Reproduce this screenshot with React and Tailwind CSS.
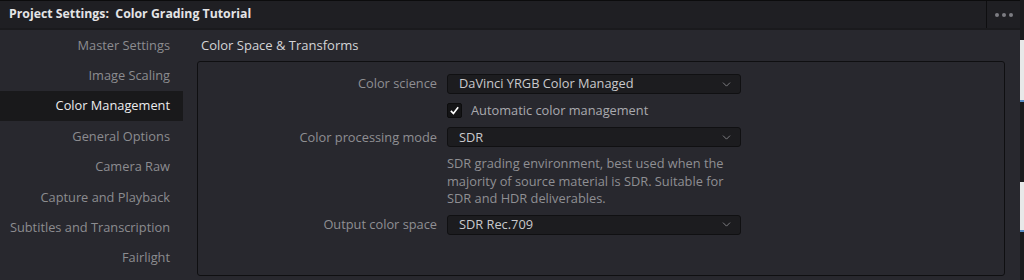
import React from "react";
import { ChevronDown } from "lucide-react";

const sections = [
  "Master Settings",
  "Image Scaling",
  "Color Management",
  "General Options",
  "Camera Raw",
  "Capture and Playback",
  "Subtitles and Transcription",
  "Fairlight",
];

function Dropdown({ value }) {
  return (
    <div className="w-[294px] h-[20px] flex items-center justify-between pl-[11px] pr-[7px] bg-[#1c1c1f] border border-[#101012] rounded-[3px] text-[#c9c9cc]">
      <span>{value}</span>
      <ChevronDown className="w-[13px] h-[13px] text-[#8a8a8e]" strokeWidth={1.6} />
    </div>
  );
}

function Row({ label, children, className = "" }) {
  return (
    <div className={`flex items-center ${className}`}>
      <div className="w-[249px] shrink-0 text-right pr-[10px] text-[#8f8f93]">{label}</div>
      {children}
    </div>
  );
}

export default function App() {
  const active = "Color Management";
  return (
    <div
      className="w-[1024px] h-[280px] flex bg-[#161618] overflow-hidden text-[12.8px]"
      style={{ fontFamily: '"Open Sans", "Noto Sans", sans-serif' }}
    >
      <div className="w-[1020px] flex flex-col bg-[#28282e]">
        {/* Title bar */}
        <div className="h-[28px] flex border-t border-[#0c0c0d] bg-[#1f1f23]">
          <div className="flex-1 flex items-center pl-[9px] text-[12.3px] font-bold text-[#e4e4e6]">
            Project Settings:&nbsp; Color Grading Tutorial
          </div>
          <div className="w-[34px] flex items-center justify-center gap-[3px] border-l border-[#0e0e10]">
            <span className="w-[4px] h-[4px] rounded-full bg-[#7d7d82]" />
            <span className="w-[4px] h-[4px] rounded-full bg-[#7d7d82]" />
            <span className="w-[4px] h-[4px] rounded-full bg-[#7d7d82]" />
          </div>
        </div>
        <div className="h-[2px] bg-[#1a1a1d]" />

        <div className="flex flex-1">
          {/* Sidebar */}
          <div className="w-[183px] flex flex-col">
            {sections.map((s) => (
              <div
                key={s}
                className={`h-[30.4px] flex items-center justify-end pr-[13px] ${
                  s === active ? "bg-[#19191b] text-[#ececee]" : "text-[#8c8c90]"
                }`}
              >
                {s}
              </div>
            ))}
          </div>

          {/* Content */}
          <div className="flex-1 flex flex-col pl-[14px] pr-[15px]">
            <div className="h-[31px] flex items-center pl-[4px] text-[13px] text-[#d4d4d7]">
              Color Space &amp; Transforms
            </div>
            <div className="h-[215px] border border-[#0f0f11] rounded-[3px] flex flex-col pt-[12px]">
              <Row label="Color science">
                <Dropdown value="DaVinci YRGB Color Managed" />
              </Row>
              <Row label="" className="mt-[7px]">
                <div className="w-[15px] h-[15px] bg-[#141416] border border-[#0c0c0d] rounded-[2px] flex items-center justify-center">
                  <svg viewBox="0 0 12 12" className="w-[11px] h-[11px]">
                    <path d="M2 6.5 L4.8 9.2 L10 2.5" fill="none" stroke="#ffffff" strokeWidth="1.8" />
                  </svg>
                </div>
                <span className="ml-[9px] text-[#aaaaae]">Automatic color management</span>
              </Row>
              <Row label="Color processing mode" className="mt-[7px]">
                <Dropdown value="SDR" />
              </Row>
              <Row label="" className="mt-[8px] items-start">
                <p className="w-[290px] leading-[17.5px] text-[#8f8f93]">
                  SDR grading environment, best used when the majority of source material is SDR. Suitable for SDR and HDR deliverables.
                </p>
              </Row>
              <Row label="Output color space" className="mt-[7px]">
                <Dropdown value="SDR Rec.709" />
              </Row>
            </div>
          </div>
        </div>
      </div>

      {/* sliver of neighbouring window */}
      <div className="w-[4px] flex flex-col bg-[#1b1b1d]">
        <div className="h-[40px]" />
        <div className="h-[60px] bg-[#e8e8e8]" />
        <div className="h-[2px] bg-[#5b8fc7]" />
        <div className="h-[80px]" />
        <div className="h-[48px] bg-[#e8e8e8]" />
        <div className="h-[2px] bg-[#5b8fc7]" />
      </div>
    </div>
  );
}
